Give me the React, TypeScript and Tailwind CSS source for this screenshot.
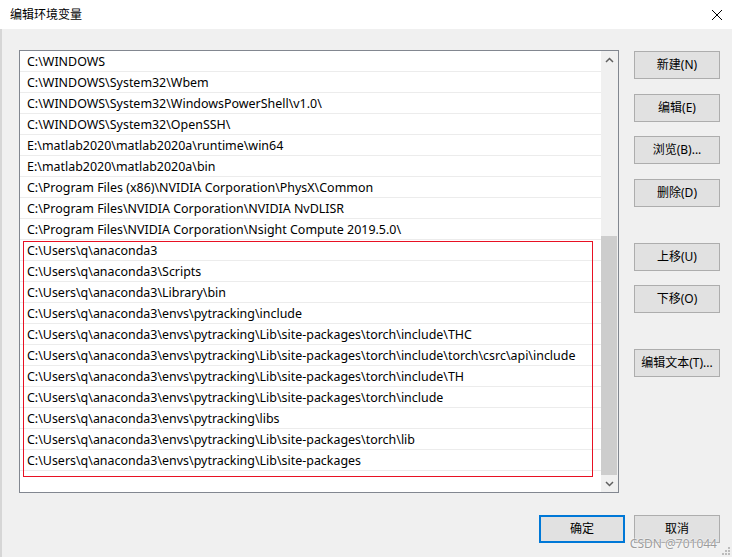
import React from 'react';

const paths = [
  'C:\\WINDOWS',
  'C:\\WINDOWS\\System32\\Wbem',
  'C:\\WINDOWS\\System32\\WindowsPowerShell\\v1.0\\',
  'C:\\WINDOWS\\System32\\OpenSSH\\',
  'E:\\matlab2020\\matlab2020a\\runtime\\win64',
  'E:\\matlab2020\\matlab2020a\\bin',
  'C:\\Program Files (x86)\\NVIDIA Corporation\\PhysX\\Common',
  'C:\\Program Files\\NVIDIA Corporation\\NVIDIA NvDLISR',
  'C:\\Program Files\\NVIDIA Corporation\\Nsight Compute 2019.5.0\\',
  'C:\\Users\\q\\anaconda3',
  'C:\\Users\\q\\anaconda3\\Scripts',
  'C:\\Users\\q\\anaconda3\\Library\\bin',
  'C:\\Users\\q\\anaconda3\\envs\\pytracking\\include',
  'C:\\Users\\q\\anaconda3\\envs\\pytracking\\Lib\\site-packages\\torch\\include\\THC',
  'C:\\Users\\q\\anaconda3\\envs\\pytracking\\Lib\\site-packages\\torch\\include\\torch\\csrc\\api\\include',
  'C:\\Users\\q\\anaconda3\\envs\\pytracking\\Lib\\site-packages\\torch\\include\\TH',
  'C:\\Users\\q\\anaconda3\\envs\\pytracking\\Lib\\site-packages\\torch\\include',
  'C:\\Users\\q\\anaconda3\\envs\\pytracking\\libs',
  'C:\\Users\\q\\anaconda3\\envs\\pytracking\\Lib\\site-packages\\torch\\lib',
  'C:\\Users\\q\\anaconda3\\envs\\pytracking\\Lib\\site-packages',
];

const sideButtons = [
  { label: '新建(N)', mt: 'mt-0' },
  { label: '编辑(E)', mt: 'mt-[15px]' },
  { label: '浏览(B)...', mt: 'mt-[14px]' },
  { label: '删除(D)', mt: 'mt-[15px]' },
  { label: '上移(U)', mt: 'mt-[36px]' },
  { label: '下移(O)', mt: 'mt-[14px]' },
  { label: '编辑文本(T)...', mt: 'mt-[36px]' },
];

const Btn = ({ label, className = '' }: { label: string; className?: string }) => (
  <div
    className={`h-[28px] w-[86px] flex items-center justify-center bg-[#e1e1e1] border border-[#adadad] text-[12px] text-black ${className}`}
  >
    {label}
  </div>
);

export default function App() {
  return (
    <div
      className="w-[732px] h-[557px] bg-[#f0f0f0] flex flex-col relative overflow-hidden"
      style={{ fontFamily: '"Noto Sans", "Noto Sans CJK SC", sans-serif' }}
    >
      {/* title bar */}
      <div className="h-[29px] bg-white flex items-center justify-between pl-[10px] pr-[8px]">
        <span className="text-[12px] text-black leading-none">编辑环境变量</span>
        <svg width="12" height="12" viewBox="0 0 12 12" className="mr-[1px]">
          <path d="M1 1 L11 11 M11 1 L1 11" stroke="#000" strokeWidth="1" fill="none" />
        </svg>
      </div>

      <div className="flex-1 flex relative">
        <div className="w-[2px] bg-[#d6d6d6]" />
        <div className="flex-1 flex flex-col pl-[17px] pt-[21px]">
          <div className="flex">
            {/* list box */}
            <div className="w-[600px] h-[443px] border border-[#828790] bg-white flex relative">
              <div className="flex-1 flex flex-col">
                {paths.map((p) => (
                  <div
                    key={p}
                    className="h-[21px] border-b border-[#ececec] pl-[7px] pt-[3px] flex items-center text-[12.45px] text-black whitespace-nowrap leading-none"
                  >
                    {p}
                  </div>
                ))}
              </div>
              {/* scrollbar */}
              <div className="w-[17px] bg-[#f0f0f0] flex flex-col">
                <div className="h-[17px] flex items-center justify-center">
                  <svg width="9" height="6" viewBox="0 0 9 6">
                    <path d="M1 5 L4.5 1.5 L8 5" stroke="#606060" strokeWidth="1.5" fill="none" />
                  </svg>
                </div>
                <div className="flex-1 flex flex-col justify-end pr-[1px]">
                  <div className="h-[239px] bg-[#cdcdcd]" />
                </div>
                <div className="h-[17px] flex items-center justify-center">
                  <svg width="9" height="6" viewBox="0 0 9 6">
                    <path d="M1 1 L4.5 4.5 L8 1" stroke="#606060" strokeWidth="1.5" fill="none" />
                  </svg>
                </div>
              </div>
              {/* highlight frame */}
              <div className="absolute left-[3px] top-[190px] w-[570px] h-[236px] border border-[#e81123] pointer-events-none" />
            </div>

            {/* side buttons */}
            <div className="ml-[15px] pt-[1px] flex flex-col">
              {sideButtons.map((b) => (
                <Btn key={b.label} label={b.label} className={b.mt} />
              ))}
            </div>
          </div>

          {/* bottom buttons */}
          <div className="flex justify-end pr-[12px] mt-[22px] gap-[9px]">
            <div className="h-[28px] w-[86px] flex items-center justify-center bg-[#e1e1e1] border-2 border-[#0078d7] text-[12px] text-black">
              确定
            </div>
            <Btn label="取消" />
          </div>
        </div>

        {/* watermark */}
        <div className="absolute right-[15px] bottom-[7px] text-[12px] leading-none text-[#9c9c9c] [text-shadow:0_0_1px_#fff,0_0_2px_#fff]">
          CSDN @701044
        </div>

        {/* resize grip */}
        <svg width="10" height="10" viewBox="0 0 10 10" className="absolute right-[1px] bottom-[1px]">
          <rect x="7" y="1" width="2" height="2" fill="#bcbcbc" />
          <rect x="4" y="4" width="2" height="2" fill="#bcbcbc" />
          <rect x="7" y="4" width="2" height="2" fill="#bcbcbc" />
          <rect x="1" y="7" width="2" height="2" fill="#bcbcbc" />
          <rect x="4" y="7" width="2" height="2" fill="#bcbcbc" />
          <rect x="7" y="7" width="2" height="2" fill="#bcbcbc" />
        </svg>
      </div>
    </div>
  );
}
